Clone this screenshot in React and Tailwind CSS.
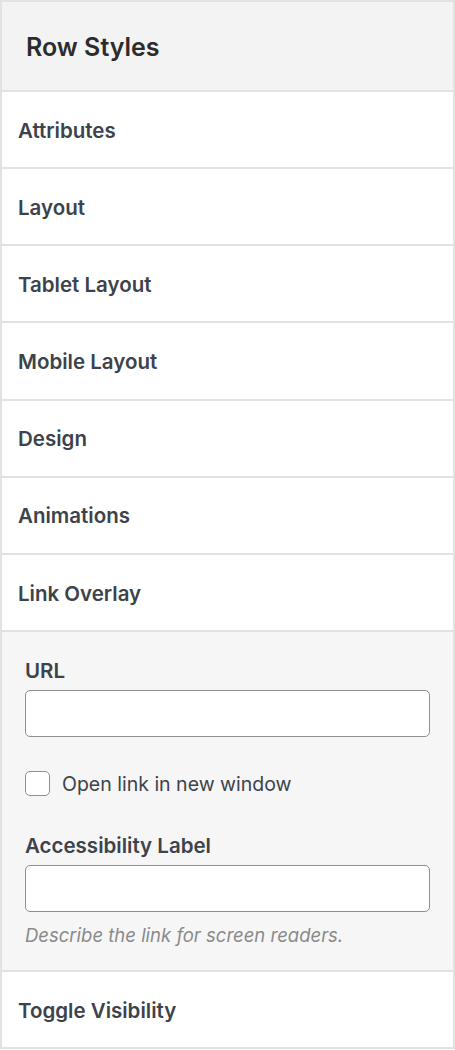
import React from 'react';

const sections = ['Attributes', 'Layout', 'Tablet Layout', 'Mobile Layout', 'Design', 'Animations', 'Link Overlay'];

function SectionRow({ title }) {
  return (
    <div className="flex h-[77.15px] items-center border-b-2 border-[#e2e2e2] bg-white px-[16px] pt-[3px]">
      <span className="text-[20.5px] font-semibold text-[#3c434a]">{title}</span>
    </div>
  );
}

function TextField({ label }) {
  return (
    <div>
      <div className="mb-[7px] text-[20.5px] font-semibold leading-[24px] text-[#3c434a]">{label}</div>
      <input
        type="text"
        className="block h-[47px] w-full rounded-[5px] border-[1.5px] border-[#8c8f94] bg-white px-3 outline-none"
      />
    </div>
  );
}

export default function App() {
  return (
    <div className="w-[455px] border-x-2 border-t-2 border-[#e2e2e2] bg-white" style={{ fontFamily: 'Inter, "Noto Sans", sans-serif' }}>
      <div className="flex h-[90px] items-center border-b-2 border-[#e2e2e2] bg-[#f3f3f3] px-[24px] pt-[3px]">
        <h2 className="text-[25px] font-semibold text-[#2c2c2c]">Row Styles</h2>
      </div>

      {sections.map((s) => (
        <SectionRow key={s} title={s} />
      ))}

      <div className="border-b-2 border-[#e2e2e2] bg-[#f6f6f6] px-[23px] pt-[27px] pb-[23px]">
        <TextField label="URL" />

        <label className="mt-[33px] flex h-[28px] items-center gap-[12px]">
          <span className="block h-[25px] w-[25px] rounded-[5px] border-[1.5px] border-[#8c8f94] bg-white" />
          <span className="text-[19.5px] leading-[28px] text-[#3c434a]">Open link in new window</span>
        </label>

        <div className="mt-[36px]">
          <TextField label="Accessibility Label" />
        </div>

        <p className="mt-[11px] text-[18.5px] italic leading-[24px] text-[#8a8a8a]">Describe the link for screen readers.</p>
      </div>

      <SectionRow title="Toggle Visibility" />
    </div>
  );
}
